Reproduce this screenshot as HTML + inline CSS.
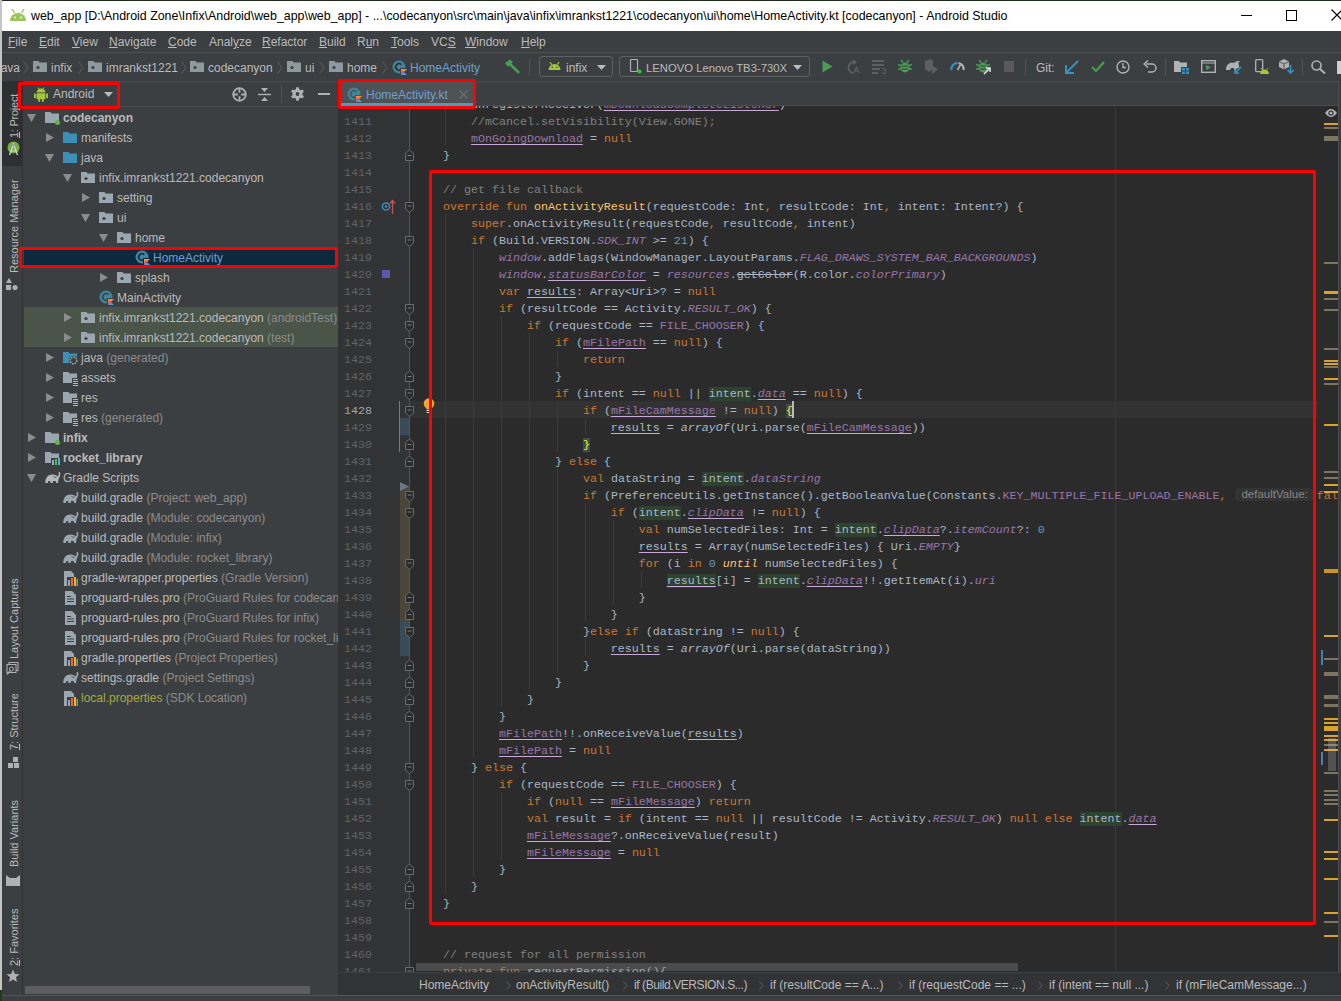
<!DOCTYPE html><html><head><meta charset="utf-8"><style>
*{margin:0;padding:0;box-sizing:border-box}
html,body{width:1341px;height:1001px;overflow:hidden;background:#3c3f41;font-family:"Liberation Sans",sans-serif;font-size:12px;color:#bbbbbb}
.a{position:absolute}
.ui{position:absolute;white-space:nowrap;font-family:"Liberation Sans",sans-serif;font-size:12px;line-height:14px;color:#bbbbbb}
.mono{font-family:"Liberation Mono",monospace}
.code{position:absolute;left:415px;white-space:pre;font-family:"Liberation Mono",monospace;font-size:11.667px;line-height:17px;height:17px;color:#a9b7c6}
.ln{position:absolute;left:338px;width:34px;text-align:right;white-space:pre;font-family:"Liberation Mono",monospace;font-size:11.667px;line-height:17px;color:#606366}
.k{color:#cc7832}.f{color:#ffc66d}.c{color:#808080}.p{color:#9876aa}.n{color:#6897bb}
.i{font-style:italic}.u{text-decoration:underline;text-decoration-color:#c8a9d8;text-underline-offset:2px}
.s{text-decoration:line-through}
.sc{background:#2e4230}
.red{position:absolute;border:3px solid #ff0000;border-radius:2px}
.tr{position:absolute;height:20px;white-space:nowrap;font-size:12px;line-height:20px;color:#bbbbbb}
.g{color:#8c8c8c}
.vt{position:absolute;white-space:nowrap;font-size:11px;line-height:14px;color:#bbbbbb;transform-origin:0 0;transform:rotate(-90deg)}
.mk{position:absolute;left:1324px;width:14px;height:2px}
.hint{display:inline-block;font-family:'Liberation Sans',sans-serif;font-style:normal;font-size:11.5px;line-height:13px;color:#878787;background:#333333;border-radius:4px;padding:0 5px 0 6px;margin-left:2px;margin-right:4px;vertical-align:1px}
.br{background:#3b514d;color:#ffef28}
.fold{position:absolute;left:403px;width:12px;height:12px}
</style></head><body><div class="a" style="left:0;top:0;width:1341px;height:1px;background:#1f2a1c"></div><div class="a" style="left:0;top:0;width:2px;height:1001px;background:#c4c4c4"></div><div class="a" style="left:0;top:990px;width:2px;height:11px;background:#1f3a1f"></div><div class="a" style="left:2px;top:1px;width:1339px;height:30px;background:#ffffff"></div><svg class="a" style="left:9px;top:8px" width="18" height="14" viewBox="0 0 18 14"><path d="M1 13 A8 8 0 0 1 17 13 Z" fill="#9bc45a"/><line x1="3" y1="1" x2="5.5" y2="5" stroke="#9bc45a" stroke-width="1.4"/><line x1="15" y1="1" x2="12.5" y2="5" stroke="#9bc45a" stroke-width="1.4"/><circle cx="6" cy="9.5" r="0.9" fill="#fff"/><circle cx="12" cy="9.5" r="0.9" fill="#fff"/></svg><div class="ui" style="left:31px;top:9px;font-size:12.4px;line-height:15px;color:#000">web_app [D:\Android Zone\Infix\Android\web_app\web_app] - ...\codecanyon\src\main\java\infix\imrankst1221\codecanyon\ui\home\HomeActivity.kt [codecanyon] - Android Studio</div><div class="a" style="left:1241px;top:15px;width:11px;height:1px;background:#000"></div><div class="a" style="left:1286px;top:10px;width:11px;height:11px;border:1px solid #000"></div><svg class="a" style="left:1331px;top:9px" width="12" height="12"><path d="M0.5 0.5 L11.5 11.5 M11.5 0.5 L0.5 11.5" stroke="#000" stroke-width="1.1"/></svg><div class="a" style="left:2px;top:31px;width:1339px;height:22px;background:#3c3f41;border-bottom:1px solid #515151"></div><div class="ui" style="left:8px;top:35px"><u>F</u>ile</div><div class="ui" style="left:39px;top:35px"><u>E</u>dit</div><div class="ui" style="left:72px;top:35px"><u>V</u>iew</div><div class="ui" style="left:109px;top:35px"><u>N</u>avigate</div><div class="ui" style="left:168px;top:35px"><u>C</u>ode</div><div class="ui" style="left:209px;top:35px">Anal<u>y</u>ze</div><div class="ui" style="left:262px;top:35px"><u>R</u>efactor</div><div class="ui" style="left:319px;top:35px"><u>B</u>uild</div><div class="ui" style="left:357px;top:35px">R<u>u</u>n</div><div class="ui" style="left:391px;top:35px"><u>T</u>ools</div><div class="ui" style="left:431px;top:35px">VC<u>S</u></div><div class="ui" style="left:465px;top:35px"><u>W</u>indow</div><div class="ui" style="left:521px;top:35px"><u>H</u>elp</div><div class="a" style="left:2px;top:53px;width:1339px;height:28px;background:#3c3f41"></div><div class="ui" style="left:2px;top:61px;width:18px;overflow:hidden;direction:rtl">java</div><svg class="a" style="left:23px;top:61px" width="6" height="13" viewBox="0 0 6 13"><path d="M0.5 0.5 L5 6.5 L0.5 12.5" fill="none" stroke="#5c5f61" stroke-width="1"/></svg><svg class="a" style="left:33px;top:61px" width="14" height="11" viewBox="0 0 14 11"><path d="M0 0 H5.5 L6.5 1.5 H14 V11 H0 Z" fill="#8e989f"/><circle cx="5" cy="6.5" r="1.6" fill="#3c3f41"/></svg><div class="ui" style="left:51px;top:61px">infix</div><svg class="a" style="left:78px;top:61px" width="6" height="13" viewBox="0 0 6 13"><path d="M0.5 0.5 L5 6.5 L0.5 12.5" fill="none" stroke="#5c5f61" stroke-width="1"/></svg><svg class="a" style="left:88px;top:61px" width="14" height="11" viewBox="0 0 14 11"><path d="M0 0 H5.5 L6.5 1.5 H14 V11 H0 Z" fill="#8e989f"/><circle cx="5" cy="6.5" r="1.6" fill="#3c3f41"/></svg><div class="ui" style="left:106px;top:61px">imrankst1221</div><svg class="a" style="left:181px;top:61px" width="6" height="13" viewBox="0 0 6 13"><path d="M0.5 0.5 L5 6.5 L0.5 12.5" fill="none" stroke="#5c5f61" stroke-width="1"/></svg><svg class="a" style="left:190px;top:61px" width="14" height="11" viewBox="0 0 14 11"><path d="M0 0 H5.5 L6.5 1.5 H14 V11 H0 Z" fill="#8e989f"/><circle cx="5" cy="6.5" r="1.6" fill="#3c3f41"/></svg><div class="ui" style="left:208px;top:61px">codecanyon</div><svg class="a" style="left:277px;top:61px" width="6" height="13" viewBox="0 0 6 13"><path d="M0.5 0.5 L5 6.5 L0.5 12.5" fill="none" stroke="#5c5f61" stroke-width="1"/></svg><svg class="a" style="left:287px;top:61px" width="14" height="11" viewBox="0 0 14 11"><path d="M0 0 H5.5 L6.5 1.5 H14 V11 H0 Z" fill="#8e989f"/><circle cx="5" cy="6.5" r="1.6" fill="#3c3f41"/></svg><div class="ui" style="left:305px;top:61px">ui</div><svg class="a" style="left:319px;top:61px" width="6" height="13" viewBox="0 0 6 13"><path d="M0.5 0.5 L5 6.5 L0.5 12.5" fill="none" stroke="#5c5f61" stroke-width="1"/></svg><svg class="a" style="left:329px;top:61px" width="14" height="11" viewBox="0 0 14 11"><path d="M0 0 H5.5 L6.5 1.5 H14 V11 H0 Z" fill="#8e989f"/><circle cx="5" cy="6.5" r="1.6" fill="#3c3f41"/></svg><div class="ui" style="left:347px;top:61px">home</div><svg class="a" style="left:382px;top:61px" width="6" height="13" viewBox="0 0 6 13"><path d="M0.5 0.5 L5 6.5 L0.5 12.5" fill="none" stroke="#5c5f61" stroke-width="1"/></svg><svg class="a" style="left:392px;top:60px" width="16" height="16" viewBox="0 0 16 16"><circle cx="7" cy="7" r="6.5" fill="#3e86a0"/><path d="M9.3 4.6 A3.3 3.3 0 1 0 9.3 9.4" fill="none" stroke="#2b2b2b" stroke-width="1.6"/><path d="M8 8 H16 L12 12 L16 16 H8 Z" fill="#3c3f41"/><path d="M9 9 H15 L9 15 Z" fill="#f88f2a"/><path d="M9 15 L12 12 L15 15 Z" fill="#3aa1e3"/><path d="M9 12 L11 10 L12 12 L9 15Z" fill="#e0508a"/></svg><div class="ui" style="left:410px;top:61px;color:#6e9fd0">HomeActivity</div><svg class="a" style="left:504px;top:59px" width="17" height="15" viewBox="0 0 17 15"><path d="M1 4 L6 0.5 L9 3 L7.5 4.5 L16 13 L14 14.8 L5.5 6.5 L4 8 Z" fill="#499c54"/></svg><div class="a" style="left:529px;top:58px;width:1px;height:18px;background:#515151"></div><div class="a" style="left:539px;top:56px;width:74px;height:21px;border:1px solid #5e6060;border-radius:3px"></div><svg class="a" style="left:548px;top:62px" width="13" height="8" viewBox="0 0 13 8"><path d="M0.5 8 A6 6 0 0 1 12.5 8 Z" fill="#a4c639"/><line x1="2" y1="0" x2="3.6" y2="2.6" stroke="#a4c639" stroke-width="1.2"/><line x1="11" y1="0" x2="9.4" y2="2.6" stroke="#a4c639" stroke-width="1.2"/><circle cx="4.2" cy="5.2" r="0.8" fill="#3c3f41"/><circle cx="8.8" cy="5.2" r="0.8" fill="#3c3f41"/></svg><div class="ui" style="left:566px;top:61px">infix</div><svg class="a" style="left:597px;top:65px" width="9" height="5" viewBox="0 0 9 5"><path d="M0 0 H9 L4.5 5 Z" fill="#bbbbbb"/></svg><div class="a" style="left:619px;top:56px;width:191px;height:21px;border:1px solid #5e6060;border-radius:3px"></div><svg class="a" style="left:629px;top:59px" width="13" height="15" viewBox="0 0 13 15"><rect x="1.5" y="0.5" width="7" height="12" rx="1" fill="none" stroke="#afb1b3" stroke-width="1.2"/><circle cx="10.5" cy="12.5" r="2" fill="#3fbf3f"/></svg><div class="ui" style="left:646px;top:61px;font-size:11.3px">LENOVO Lenovo TB3-730X</div><svg class="a" style="left:793px;top:65px" width="9" height="5" viewBox="0 0 9 5"><path d="M0 0 H9 L4.5 5 Z" fill="#bbbbbb"/></svg><svg class="a" style="left:822px;top:60px" width="11" height="13"><path d="M0.5 0.5 L10.5 6.5 L0.5 12.5 Z" fill="#499c54"/></svg><svg class="a" style="left:845px;top:59px" width="16" height="15" viewBox="0 0 16 15"><path d="M10 3 A5.5 5.5 0 1 0 8 14" fill="none" stroke="#5f5f5f" stroke-width="1.8"/><path d="M8 0 L12 3.5 L8 6Z" fill="#5f5f5f"/><path d="M9 14 L11.5 8 L14 14 M10 12 H13" stroke="#5f5f5f" stroke-width="1.2" fill="none"/></svg><svg class="a" style="left:872px;top:60px" width="15" height="14" viewBox="0 0 15 14"><rect x="0" y="0" width="12" height="2" fill="#5f5f5f"/><rect x="0" y="4" width="12" height="2" fill="#5f5f5f"/><rect x="0" y="8" width="8" height="2" fill="#5f5f5f"/><rect x="0" y="12" width="6" height="2" fill="#5f5f5f"/><path d="M10 9 A2.5 2.5 0 1 1 10 13.5" stroke="#5f5f5f" fill="none" stroke-width="1.2"/></svg><svg class="a" style="left:898px;top:59px" width="14" height="14" viewBox="0 0 14 14"><ellipse cx="7" cy="8.5" rx="4.5" ry="5" fill="#499c54"/><path d="M3 1 L5 3.5 M11 1 L9 3.5 M0 6 H3 M11 6 H14 M0 10 H3 M11 10 H14" stroke="#499c54" stroke-width="1.4"/><path d="M4 7 H10 M4 10 H10" stroke="#3c3f41" stroke-width="1"/></svg><svg class="a" style="left:924px;top:59px" width="15" height="15" viewBox="0 0 15 15"><path d="M1 2 L7 0 L9 2 V10 L5 13 L1 10 Z" fill="#5f5f5f"/><path d="M8 6 L14 10.5 L8 15 Z" fill="#5f5f5f"/></svg><svg class="a" style="left:950px;top:60px" width="15" height="12" viewBox="0 0 15 12"><path d="M1.5 10 A6 6 0 0 1 7.5 3" fill="none" stroke="#3592c4" stroke-width="2.2"/><path d="M8.5 3 A6 6 0 0 1 13.5 10" fill="none" stroke="#afb1b3" stroke-width="2.2"/><path d="M7.5 10 L10.5 4.5" stroke="#afb1b3" stroke-width="1.6"/></svg><svg class="a" style="left:976px;top:59px" width="14" height="14" viewBox="0 0 14 14"><ellipse cx="7" cy="8.5" rx="4.5" ry="5" fill="#499c54"/><path d="M3 1 L5 3.5 M11 1 L9 3.5 M0 6 H3 M11 6 H14 M0 10 H3 M11 10 H14" stroke="#499c54" stroke-width="1.4"/><path d="M4 7 H10 M4 10 H10" stroke="#3c3f41" stroke-width="1"/></svg><svg class="a" style="left:983px;top:66px" width="9" height="9"><path d="M1 8 L7 2 M3 2 H7 V6" stroke="#dddddd" stroke-width="1.6" fill="none"/></svg><div class="a" style="left:1004px;top:61px;width:10px;height:11px;background:#5a5a5a"></div><div class="a" style="left:1025px;top:58px;width:1px;height:18px;background:#515151"></div><div class="ui" style="left:1036px;top:61px">Git:</div><svg class="a" style="left:1065px;top:60px" width="14" height="14" viewBox="0 0 14 14"><path d="M13 1 L2 12" stroke="#3592c4" stroke-width="2"/><path d="M1 5 V13 H9" stroke="#3592c4" stroke-width="2" fill="none"/></svg><svg class="a" style="left:1091px;top:61px" width="14" height="12" viewBox="0 0 14 12"><path d="M1 6 L5 10 L13 1" stroke="#499c54" stroke-width="2.2" fill="none"/></svg><svg class="a" style="left:1116px;top:60px" width="14" height="14" viewBox="0 0 14 14"><circle cx="7" cy="7" r="6" fill="none" stroke="#afb1b3" stroke-width="1.4"/><path d="M7 3 V7.5 H10" stroke="#afb1b3" stroke-width="1.4" fill="none"/></svg><svg class="a" style="left:1143px;top:60px" width="14" height="14" viewBox="0 0 14 14"><path d="M3 4 H9 A4 4 0 0 1 9 12 H5" stroke="#afb1b3" stroke-width="1.5" fill="none"/><path d="M5 0.5 L1 4 L5 7.5" stroke="#afb1b3" stroke-width="1.5" fill="none"/></svg><div class="a" style="left:1165px;top:58px;width:1px;height:18px;background:#515151"></div><svg class="a" style="left:1174px;top:60px" width="16" height="14" viewBox="0 0 16 14"><path d="M0 1 H5 L6 2.5 H13 V7 H7 V12 H0Z" fill="#afb1b3"/><rect x="8" y="8" width="3" height="2.5" fill="#3592c4"/><rect x="12" y="8" width="3" height="2.5" fill="#3592c4"/><rect x="8" y="11.5" width="3" height="2.5" fill="#3592c4"/><rect x="12" y="11.5" width="3" height="2.5" fill="#3592c4"/></svg><svg class="a" style="left:1201px;top:60px" width="15" height="13" viewBox="0 0 15 13"><rect x="0.7" y="0.7" width="13.6" height="11.6" fill="none" stroke="#afb1b3" stroke-width="1.4"/><path d="M0.7 3 H14.3" stroke="#afb1b3"/><path d="M5 5 L10 7.5 L5 10Z" fill="#499c54"/></svg><svg class="a" style="left:1226px;top:59px" width="16" height="15" viewBox="0 0 16 15"><path d="M0 11 C0 5 4 3 8 4 C10 2 13 1 14 3 C12 3 12 5 13 6 V9 H11 L10 11 H8 V9 H5 L4 11 Z" fill="#afb1b3"/><path d="M15 8 L9 14 M9 10 V14 H13" stroke="#3592c4" stroke-width="1.6" fill="none"/></svg><svg class="a" style="left:1255px;top:59px" width="14" height="15" viewBox="0 0 14 15"><rect x="0.7" y="0.7" width="7" height="12" rx="1" fill="none" stroke="#afb1b3" stroke-width="1.3"/><path d="M5 15 A4.5 4.5 0 0 1 14 15Z" fill="#a4c639"/><path d="M6 9 L7 10.5 M13 9 L12 10.5" stroke="#a4c639"/></svg><svg class="a" style="left:1279px;top:59px" width="15" height="15" viewBox="0 0 15 15"><path d="M5 0 L10 2.5 V8 L5 10.5 L0 8 V2.5Z" fill="#afb1b3"/><path d="M0 2.5 L5 5 L10 2.5 M5 5 V10.5" stroke="#3c3f41" stroke-width="0.8" fill="none"/><path d="M11.5 6 V14 M8.5 11 L11.5 14 L14.5 11" stroke="#3592c4" stroke-width="1.6" fill="none"/></svg><div class="a" style="left:1302px;top:58px;width:1px;height:18px;background:#515151"></div><svg class="a" style="left:1311px;top:60px" width="15" height="14" viewBox="0 0 15 14"><circle cx="5.5" cy="5.5" r="4.5" fill="none" stroke="#afb1b3" stroke-width="1.6"/><path d="M8.8 8.8 L14 13.5" stroke="#afb1b3" stroke-width="2"/></svg><div class="a" style="left:1337px;top:61px;width:4px;height:13px;background:#d0d0d0"></div><div class="a" style="left:2px;top:81px;width:21px;height:914px;background:#3c3f41;border-right:1px solid #323232"></div><div class="a" style="left:2px;top:81px;width:21px;height:85px;background:#2d2f30"></div><div class="vt" style="left:7px;top:138px;color:#bbbbbb"><span style="letter-spacing:-0.25px"><u>1</u>: Project</span></div><svg class="a" style="left:7px;top:141px" width="14" height="15" viewBox="0 0 14 15"><circle cx="6.5" cy="6.5" r="6" fill="#78b040"/><path d="M2.5 14 L6.5 3 L10.5 14 M4 10 H9" stroke="#d8d8d8" stroke-width="1.2" fill="none"/><circle cx="6.5" cy="4" r="1.3" fill="#a0a0a0"/></svg><div class="vt" style="left:7px;top:273px;color:#bbbbbb">Resource Manager</div><svg class="a" style="left:6px;top:278px" width="12" height="12" viewBox="0 0 12 12"><path d="M3 0 L6 5 H0Z" fill="#afb1b3"/><rect x="0" y="7" width="5" height="5" fill="#afb1b3"/><circle cx="9" cy="9.5" r="2.6" fill="#afb1b3"/></svg><div class="vt" style="left:7px;top:659px;color:#bbbbbb">Layout Captures</div><svg class="a" style="left:6px;top:662px" width="13" height="13" viewBox="0 0 13 13"><rect x="3" y="0.5" width="9" height="8" fill="none" stroke="#afb1b3"/><rect x="1" y="2.5" width="9" height="8" fill="#3c3f41" stroke="#afb1b3"/><circle cx="5.5" cy="7" r="2" fill="none" stroke="#afb1b3"/><path d="M4 9 L1 12.5" stroke="#afb1b3" stroke-width="1.3"/></svg><div class="vt" style="left:7px;top:750px;color:#bbbbbb"><u>7</u>: Structure</div><svg class="a" style="left:8px;top:757px" width="11" height="11" viewBox="0 0 11 11"><rect x="5" y="0" width="5" height="5" fill="#afb1b3"/><rect x="0" y="6" width="5" height="5" fill="#afb1b3"/><rect x="6" y="6" width="5" height="5" fill="#afb1b3"/></svg><div class="vt" style="left:7px;top:867px;color:#bbbbbb">Build Variants</div><svg class="a" style="left:6px;top:875px" width="14" height="11" viewBox="0 0 14 11"><path d="M0 0 L4 3 H10 L14 0 V11 H0Z" fill="#afb1b3"/></svg><div class="vt" style="left:7px;top:966px;color:#bbbbbb"><u>2</u>: Favorites</div><svg class="a" style="left:6px;top:969px" width="14" height="14" viewBox="0 0 14 14"><path d="M7 0.5 L8.8 5 L13.5 5.3 L9.9 8.3 L11 13 L7 10.4 L3 13 L4.1 8.3 L0.5 5.3 L5.2 5Z" fill="#afb1b3"/></svg><div class="a" style="left:24px;top:81px;width:314px;height:914px;background:#3c3f41"></div><div class="a" style="left:24px;top:81px;width:314px;height:26px;border-top:1px solid #4b4b4b;border-bottom:1px solid #4b4b4b"></div><svg class="a" style="left:34px;top:87px" width="14" height="15" viewBox="0 0 14 15"><path d="M2.5 5.5 A4.5 4 0 0 1 11.5 5.5 Z" fill="#a4c639"/><line x1="4" y1="0.5" x2="5.2" y2="2.5" stroke="#a4c639"/><line x1="10" y1="0.5" x2="8.8" y2="2.5" stroke="#a4c639"/><rect x="2.5" y="6.3" width="9" height="6" rx="1" fill="#a4c639"/><rect x="0" y="6.3" width="1.8" height="5" rx="0.9" fill="#a4c639"/><rect x="12.2" y="6.3" width="1.8" height="5" rx="0.9" fill="#a4c639"/><rect x="4.3" y="11" width="1.8" height="4" rx="0.9" fill="#a4c639"/><rect x="7.9" y="11" width="1.8" height="4" rx="0.9" fill="#a4c639"/></svg><div class="ui" style="left:53px;top:87px">Android</div><svg class="a" style="left:104px;top:92px" width="9" height="5" viewBox="0 0 9 5"><path d="M0 0 H9 L4.5 5 Z" fill="#bbbbbb"/></svg><svg class="a" style="left:232px;top:87px" width="15" height="15" viewBox="0 0 15 15"><circle cx="7.5" cy="7.5" r="6.3" fill="none" stroke="#afb1b3" stroke-width="1.8"/><path d="M7.5 1.5 V5.8 M7.5 9.2 V13.5 M1.5 7.5 H5.8 M9.2 7.5 H13.5" stroke="#afb1b3" stroke-width="1.8"/></svg><svg class="a" style="left:258px;top:87px" width="13" height="15" viewBox="0 0 13 15"><path d="M0 7.5 H13" stroke="#afb1b3" stroke-width="1.4"/><path d="M3 1 H10 L6.5 5 Z M3 14 H10 L6.5 10 Z" fill="#afb1b3"/></svg><div class="a" style="left:281px;top:86px;width:1px;height:17px;background:#515151"></div><svg class="a" style="left:291px;top:87px" width="13" height="14" viewBox="0 0 13 14"><circle cx="6.5" cy="7" r="5" fill="#afb1b3"/><rect x="5" y="0.3" width="3" height="3" rx="0.8" fill="#afb1b3" transform="rotate(0 6.5 7)"/><rect x="5" y="0.3" width="3" height="3" rx="0.8" fill="#afb1b3" transform="rotate(60 6.5 7)"/><rect x="5" y="0.3" width="3" height="3" rx="0.8" fill="#afb1b3" transform="rotate(120 6.5 7)"/><rect x="5" y="0.3" width="3" height="3" rx="0.8" fill="#afb1b3" transform="rotate(180 6.5 7)"/><rect x="5" y="0.3" width="3" height="3" rx="0.8" fill="#afb1b3" transform="rotate(240 6.5 7)"/><rect x="5" y="0.3" width="3" height="3" rx="0.8" fill="#afb1b3" transform="rotate(300 6.5 7)"/><circle cx="6.5" cy="7" r="1.9" fill="#3c3f41"/></svg><div class="a" style="left:318px;top:93px;width:12px;height:2px;background:#afb1b3"></div><div class="a" style="left:24px;top:248px;width:314px;height:20px;background:#0d293e"></div><div class="a" style="left:24px;top:307px;width:314px;height:40px;background:#4a5449"></div><div class="a" style="left:24px;top:108px;width:314px;height:614px;overflow:hidden"><svg class="a" style="left:3px;top:6px" width="9" height="8" viewBox="0 0 9 8"><path d="M0 0 H9 L4.5 8Z" fill="#8c8c8c"/></svg><svg class="a" style="left:21px;top:4px" width="16" height="13" viewBox="0 0 16 13"><path d="M0 0 H5.5 L6.5 1.5 H14 V11 H0 Z" fill="#9aa7b0"/><circle cx="12.5" cy="10.5" r="2.5" fill="#62b543"/></svg><div class="tr" style="left:39px;top:0px;font-weight:bold">codecanyon</div><svg class="a" style="left:22px;top:25px" width="8" height="9" viewBox="0 0 8 9"><path d="M0 0 L8 4.5 L0 9Z" fill="#8c8c8c"/></svg><svg class="a" style="left:39px;top:24px" width="14" height="11" viewBox="0 0 14 11"><path d="M0 0 H5.5 L6.5 1.5 H14 V11 H0 Z" fill="#3d8fb5"/></svg><div class="tr" style="left:57px;top:20px">manifests</div><svg class="a" style="left:21px;top:46px" width="9" height="8" viewBox="0 0 9 8"><path d="M0 0 H9 L4.5 8Z" fill="#8c8c8c"/></svg><svg class="a" style="left:39px;top:44px" width="14" height="11" viewBox="0 0 14 11"><path d="M0 0 H5.5 L6.5 1.5 H14 V11 H0 Z" fill="#3d8fb5"/></svg><div class="tr" style="left:57px;top:40px">java</div><svg class="a" style="left:39px;top:66px" width="9" height="8" viewBox="0 0 9 8"><path d="M0 0 H9 L4.5 8Z" fill="#8c8c8c"/></svg><svg class="a" style="left:57px;top:64px" width="14" height="11" viewBox="0 0 14 11"><path d="M0 0 H5.5 L6.5 1.5 H14 V11 H0 Z" fill="#9aa7b0"/><circle cx="5" cy="6.5" r="1.6" fill="#3c3f41"/></svg><div class="tr" style="left:75px;top:60px">infix.imrankst1221.codecanyon</div><svg class="a" style="left:58px;top:85px" width="8" height="9" viewBox="0 0 8 9"><path d="M0 0 L8 4.5 L0 9Z" fill="#8c8c8c"/></svg><svg class="a" style="left:75px;top:84px" width="14" height="11" viewBox="0 0 14 11"><path d="M0 0 H5.5 L6.5 1.5 H14 V11 H0 Z" fill="#9aa7b0"/><circle cx="5" cy="6.5" r="1.6" fill="#3c3f41"/></svg><div class="tr" style="left:93px;top:80px">setting</div><svg class="a" style="left:57px;top:106px" width="9" height="8" viewBox="0 0 9 8"><path d="M0 0 H9 L4.5 8Z" fill="#8c8c8c"/></svg><svg class="a" style="left:75px;top:104px" width="14" height="11" viewBox="0 0 14 11"><path d="M0 0 H5.5 L6.5 1.5 H14 V11 H0 Z" fill="#9aa7b0"/><circle cx="5" cy="6.5" r="1.6" fill="#3c3f41"/></svg><div class="tr" style="left:93px;top:100px">ui</div><svg class="a" style="left:75px;top:126px" width="9" height="8" viewBox="0 0 9 8"><path d="M0 0 H9 L4.5 8Z" fill="#8c8c8c"/></svg><svg class="a" style="left:93px;top:124px" width="14" height="11" viewBox="0 0 14 11"><path d="M0 0 H5.5 L6.5 1.5 H14 V11 H0 Z" fill="#9aa7b0"/><circle cx="5" cy="6.5" r="1.6" fill="#3c3f41"/></svg><div class="tr" style="left:111px;top:120px">home</div><svg class="a" style="left:111px;top:142px" width="16" height="16" viewBox="0 0 16 16"><circle cx="7" cy="7" r="6.5" fill="#3e86a0"/><path d="M9.3 4.6 A3.3 3.3 0 1 0 9.3 9.4" fill="none" stroke="#0d293e" stroke-width="1.6"/><path d="M8 8 H16 V16 H8 Z" fill="#0d293e"/><path d="M9 9 H15 L9 15 Z" fill="#f88f2a"/><path d="M9 15 L12 12 L15 15 Z" fill="#3aa1e3"/><path d="M9 12.5 L11.2 10.3 L12 12 L9 15Z" fill="#e0508a"/></svg><div class="tr" style="left:129px;top:140px;color:#6e9fd0">HomeActivity</div><svg class="a" style="left:76px;top:165px" width="8" height="9" viewBox="0 0 8 9"><path d="M0 0 L8 4.5 L0 9Z" fill="#8c8c8c"/></svg><svg class="a" style="left:93px;top:164px" width="14" height="11" viewBox="0 0 14 11"><path d="M0 0 H5.5 L6.5 1.5 H14 V11 H0 Z" fill="#9aa7b0"/><circle cx="5" cy="6.5" r="1.6" fill="#3c3f41"/></svg><div class="tr" style="left:111px;top:160px">splash</div><svg class="a" style="left:75px;top:182px" width="16" height="16" viewBox="0 0 16 16"><circle cx="7" cy="7" r="6.5" fill="#3e86a0"/><path d="M9.3 4.6 A3.3 3.3 0 1 0 9.3 9.4" fill="none" stroke="#3c3f41" stroke-width="1.6"/><path d="M8 8 H16 V16 H8 Z" fill="#3c3f41"/><path d="M9 9 H15 L9 15 Z" fill="#f88f2a"/><path d="M9 15 L12 12 L15 15 Z" fill="#3aa1e3"/><path d="M9 12.5 L11.2 10.3 L12 12 L9 15Z" fill="#e0508a"/></svg><div class="tr" style="left:93px;top:180px">MainActivity</div><svg class="a" style="left:40px;top:205px" width="8" height="9" viewBox="0 0 8 9"><path d="M0 0 L8 4.5 L0 9Z" fill="#8c8c8c"/></svg><svg class="a" style="left:57px;top:204px" width="14" height="11" viewBox="0 0 14 11"><path d="M0 0 H5.5 L6.5 1.5 H14 V11 H0 Z" fill="#9aa7b0"/><circle cx="5" cy="6.5" r="1.6" fill="#3c3f41"/></svg><div class="tr" style="left:75px;top:200px">infix.imrankst1221.codecanyon <span class="g">(androidTest)</span></div><svg class="a" style="left:40px;top:225px" width="8" height="9" viewBox="0 0 8 9"><path d="M0 0 L8 4.5 L0 9Z" fill="#8c8c8c"/></svg><svg class="a" style="left:57px;top:224px" width="14" height="11" viewBox="0 0 14 11"><path d="M0 0 H5.5 L6.5 1.5 H14 V11 H0 Z" fill="#9aa7b0"/><circle cx="5" cy="6.5" r="1.6" fill="#3c3f41"/></svg><div class="tr" style="left:75px;top:220px">infix.imrankst1221.codecanyon <span class="g">(test)</span></div><svg class="a" style="left:22px;top:245px" width="8" height="9" viewBox="0 0 8 9"><path d="M0 0 L8 4.5 L0 9Z" fill="#8c8c8c"/></svg><svg class="a" style="left:39px;top:244px" width="16" height="14" viewBox="0 0 16 14"><path d="M0 0 H5.5 L6.5 1.5 H14 V11 H0 Z" fill="#3d8fb5"/><circle cx="10.5" cy="8.5" r="4.5" fill="#3c3f41"/><circle cx="10.5" cy="8.5" r="3.3" fill="none" stroke="#afb1b3" stroke-width="1.4" stroke-dasharray="1.5 1"/></svg><div class="tr" style="left:57px;top:240px">java <span class="g">(generated)</span></div><svg class="a" style="left:22px;top:265px" width="8" height="9" viewBox="0 0 8 9"><path d="M0 0 L8 4.5 L0 9Z" fill="#8c8c8c"/></svg><svg class="a" style="left:39px;top:264px" width="16" height="14" viewBox="0 0 16 14"><path d="M0 0 H5.5 L6.5 1.5 H14 V11 H0 Z" fill="#9aa7b0"/><rect x="9" y="6" width="7" height="8" fill="#3c3f41"/><path d="M10 7.5 H15 M10 9.5 H15 M10 11.5 H15 M10 13.5 H15" stroke="#f4af3d" stroke-width="1"/></svg><div class="tr" style="left:57px;top:260px">assets</div><svg class="a" style="left:22px;top:285px" width="8" height="9" viewBox="0 0 8 9"><path d="M0 0 L8 4.5 L0 9Z" fill="#8c8c8c"/></svg><svg class="a" style="left:39px;top:284px" width="16" height="14" viewBox="0 0 16 14"><path d="M0 0 H5.5 L6.5 1.5 H14 V11 H0 Z" fill="#9aa7b0"/><rect x="9" y="6" width="7" height="8" fill="#3c3f41"/><path d="M10 7.5 H15 M10 9.5 H15 M10 11.5 H15 M10 13.5 H15" stroke="#f4af3d" stroke-width="1"/></svg><div class="tr" style="left:57px;top:280px">res</div><svg class="a" style="left:22px;top:305px" width="8" height="9" viewBox="0 0 8 9"><path d="M0 0 L8 4.5 L0 9Z" fill="#8c8c8c"/></svg><svg class="a" style="left:39px;top:304px" width="16" height="14" viewBox="0 0 16 14"><path d="M0 0 H5.5 L6.5 1.5 H14 V11 H0 Z" fill="#9aa7b0"/><rect x="9" y="6" width="7" height="8" fill="#3c3f41"/><path d="M10 7.5 H15 M10 9.5 H15 M10 11.5 H15 M10 13.5 H15" stroke="#f4af3d" stroke-width="1"/></svg><div class="tr" style="left:57px;top:300px">res <span class="g">(generated)</span></div><svg class="a" style="left:4px;top:325px" width="8" height="9" viewBox="0 0 8 9"><path d="M0 0 L8 4.5 L0 9Z" fill="#8c8c8c"/></svg><svg class="a" style="left:21px;top:324px" width="16" height="13" viewBox="0 0 16 13"><path d="M0 0 H5.5 L6.5 1.5 H14 V11 H0 Z" fill="#9aa7b0"/><circle cx="12.5" cy="10.5" r="2.5" fill="#62b543"/></svg><div class="tr" style="left:39px;top:320px;font-weight:bold">infix</div><svg class="a" style="left:4px;top:345px" width="8" height="9" viewBox="0 0 8 9"><path d="M0 0 L8 4.5 L0 9Z" fill="#8c8c8c"/></svg><svg class="a" style="left:21px;top:344px" width="16" height="13" viewBox="0 0 16 13"><path d="M0 0 H5.5 L6.5 1.5 H14 V11 H0 Z" fill="#9aa7b0"/><rect x="6" y="6" width="10" height="7" fill="#3c3f41"/><rect x="7" y="8" width="2" height="5" fill="#9aa7b0"/><rect x="10" y="7" width="2" height="6" fill="#62b543"/><rect x="13" y="6" width="2" height="7" fill="#40b6e0"/></svg><div class="tr" style="left:39px;top:340px;font-weight:bold">rocket_library</div><svg class="a" style="left:3px;top:366px" width="9" height="8" viewBox="0 0 9 8"><path d="M0 0 H9 L4.5 8Z" fill="#8c8c8c"/></svg><svg class="a" style="left:21px;top:363px" width="16" height="13" viewBox="0 0 16 13"><path d="M0.3 12 C0.3 6.5 3 3.5 7.5 3.5 C10.5 3.5 12 4.5 12.8 5.5 C13.5 4.5 14 3.5 13.6 2 C13.4 1.3 14.6 0.6 15.1 1.5 C15.7 3 15.1 5.5 14.1 7 C13.6 8 13.1 9 13.1 12 H11.2 L10.6 10 H8.2 L7.6 12 H5.6 L5 10 H3.4 L2.8 12 Z" fill="#b4b6b8"/><path d="M8.5 5.5 Q10 7 11.5 6" stroke="#3c3f41" stroke-width="0.8" fill="none"/></svg><div class="tr" style="left:39px;top:360px">Gradle Scripts</div><svg class="a" style="left:39px;top:383px" width="16" height="13" viewBox="0 0 16 13"><path d="M0.3 12 C0.3 6.5 3 3.5 7.5 3.5 C10.5 3.5 12 4.5 12.8 5.5 C13.5 4.5 14 3.5 13.6 2 C13.4 1.3 14.6 0.6 15.1 1.5 C15.7 3 15.1 5.5 14.1 7 C13.6 8 13.1 9 13.1 12 H11.2 L10.6 10 H8.2 L7.6 12 H5.6 L5 10 H3.4 L2.8 12 Z" fill="#9aa7b0"/><path d="M8.5 5.5 Q10 7 11.5 6" stroke="#3c3f41" stroke-width="0.8" fill="none"/></svg><div class="tr" style="left:57px;top:380px">build.gradle <span class="g">(Project: web_app)</span></div><svg class="a" style="left:39px;top:403px" width="16" height="13" viewBox="0 0 16 13"><path d="M0.3 12 C0.3 6.5 3 3.5 7.5 3.5 C10.5 3.5 12 4.5 12.8 5.5 C13.5 4.5 14 3.5 13.6 2 C13.4 1.3 14.6 0.6 15.1 1.5 C15.7 3 15.1 5.5 14.1 7 C13.6 8 13.1 9 13.1 12 H11.2 L10.6 10 H8.2 L7.6 12 H5.6 L5 10 H3.4 L2.8 12 Z" fill="#9aa7b0"/><path d="M8.5 5.5 Q10 7 11.5 6" stroke="#3c3f41" stroke-width="0.8" fill="none"/></svg><div class="tr" style="left:57px;top:400px">build.gradle <span class="g">(Module: codecanyon)</span></div><svg class="a" style="left:39px;top:423px" width="16" height="13" viewBox="0 0 16 13"><path d="M0.3 12 C0.3 6.5 3 3.5 7.5 3.5 C10.5 3.5 12 4.5 12.8 5.5 C13.5 4.5 14 3.5 13.6 2 C13.4 1.3 14.6 0.6 15.1 1.5 C15.7 3 15.1 5.5 14.1 7 C13.6 8 13.1 9 13.1 12 H11.2 L10.6 10 H8.2 L7.6 12 H5.6 L5 10 H3.4 L2.8 12 Z" fill="#9aa7b0"/><path d="M8.5 5.5 Q10 7 11.5 6" stroke="#3c3f41" stroke-width="0.8" fill="none"/></svg><div class="tr" style="left:57px;top:420px">build.gradle <span class="g">(Module: infix)</span></div><svg class="a" style="left:39px;top:443px" width="16" height="13" viewBox="0 0 16 13"><path d="M0.3 12 C0.3 6.5 3 3.5 7.5 3.5 C10.5 3.5 12 4.5 12.8 5.5 C13.5 4.5 14 3.5 13.6 2 C13.4 1.3 14.6 0.6 15.1 1.5 C15.7 3 15.1 5.5 14.1 7 C13.6 8 13.1 9 13.1 12 H11.2 L10.6 10 H8.2 L7.6 12 H5.6 L5 10 H3.4 L2.8 12 Z" fill="#9aa7b0"/><path d="M8.5 5.5 Q10 7 11.5 6" stroke="#3c3f41" stroke-width="0.8" fill="none"/></svg><div class="tr" style="left:57px;top:440px">build.gradle <span class="g">(Module: rocket_library)</span></div><svg class="a" style="left:40px;top:463px" width="14" height="15" viewBox="0 0 14 15"><path d="M0 0 H7 L10 3 V15 H0Z" fill="#9aa7b0"/><rect x="3" y="6" width="11" height="9" fill="#3c3f41"/><rect x="4" y="9" width="2" height="6" fill="#9aa7b0"/><rect x="7" y="7" width="2" height="8" fill="#f26522"/><rect x="10" y="6" width="2" height="9" fill="#f4af3d"/><rect x="12.5" y="8" width="1.5" height="7" fill="#62b543"/></svg><div class="tr" style="left:57px;top:460px">gradle-wrapper.properties <span class="g">(Gradle Version)</span></div><svg class="a" style="left:41px;top:483px" width="11" height="14" viewBox="0 0 11 14"><path d="M0 0 H7 L11 4 V14 H0Z" fill="#9aa7b0"/><path d="M2 5.5 H6 M2 8 H9 M2 10.5 H9" stroke="#3c3f41" stroke-width="1"/></svg><div class="tr" style="left:57px;top:480px">proguard-rules.pro <span class="g">(ProGuard Rules for codecanyon)</span></div><svg class="a" style="left:41px;top:503px" width="11" height="14" viewBox="0 0 11 14"><path d="M0 0 H7 L11 4 V14 H0Z" fill="#9aa7b0"/><path d="M2 5.5 H6 M2 8 H9 M2 10.5 H9" stroke="#3c3f41" stroke-width="1"/></svg><div class="tr" style="left:57px;top:500px">proguard-rules.pro <span class="g">(ProGuard Rules for infix)</span></div><svg class="a" style="left:41px;top:523px" width="11" height="14" viewBox="0 0 11 14"><path d="M0 0 H7 L11 4 V14 H0Z" fill="#9aa7b0"/><path d="M2 5.5 H6 M2 8 H9 M2 10.5 H9" stroke="#3c3f41" stroke-width="1"/></svg><div class="tr" style="left:57px;top:520px">proguard-rules.pro <span class="g">(ProGuard Rules for rocket_library)</span></div><svg class="a" style="left:40px;top:543px" width="14" height="15" viewBox="0 0 14 15"><path d="M0 0 H7 L10 3 V15 H0Z" fill="#9aa7b0"/><rect x="3" y="6" width="11" height="9" fill="#3c3f41"/><rect x="4" y="9" width="2" height="6" fill="#9aa7b0"/><rect x="7" y="7" width="2" height="8" fill="#f26522"/><rect x="10" y="6" width="2" height="9" fill="#f4af3d"/><rect x="12.5" y="8" width="1.5" height="7" fill="#62b543"/></svg><div class="tr" style="left:57px;top:540px">gradle.properties <span class="g">(Project Properties)</span></div><svg class="a" style="left:39px;top:563px" width="16" height="13" viewBox="0 0 16 13"><path d="M0.3 12 C0.3 6.5 3 3.5 7.5 3.5 C10.5 3.5 12 4.5 12.8 5.5 C13.5 4.5 14 3.5 13.6 2 C13.4 1.3 14.6 0.6 15.1 1.5 C15.7 3 15.1 5.5 14.1 7 C13.6 8 13.1 9 13.1 12 H11.2 L10.6 10 H8.2 L7.6 12 H5.6 L5 10 H3.4 L2.8 12 Z" fill="#9aa7b0"/><path d="M8.5 5.5 Q10 7 11.5 6" stroke="#3c3f41" stroke-width="0.8" fill="none"/></svg><div class="tr" style="left:57px;top:560px">settings.gradle <span class="g">(Project Settings)</span></div><svg class="a" style="left:40px;top:583px" width="14" height="15" viewBox="0 0 14 15"><path d="M0 0 H7 L10 3 V15 H0Z" fill="#9aa7b0"/><rect x="3" y="6" width="11" height="9" fill="#3c3f41"/><rect x="4" y="9" width="2" height="6" fill="#9aa7b0"/><rect x="7" y="7" width="2" height="8" fill="#f26522"/><rect x="10" y="6" width="2" height="9" fill="#f4af3d"/><rect x="12.5" y="8" width="1.5" height="7" fill="#62b543"/></svg><div class="tr" style="left:57px;top:580px;color:#a8a83a">local.properties <span class="g">(SDK Location)</span></div></div><div class="a" style="left:25px;top:986px;width:285px;height:8px;background:#5b5d5f"></div><div class="a" style="left:338px;top:81px;width:1003px;height:25px;background:#3c3f41;border-top:1px solid #4b4b4b;border-bottom:1px solid #4b4b4b"></div><div class="a" style="left:341px;top:82px;width:132px;height:23px;background:#4e5254"></div><div class="a" style="left:341px;top:103px;width:132px;height:3px;background:#40a0c0"></div><svg class="a" style="left:347px;top:87px" width="16" height="16" viewBox="0 0 16 16"><circle cx="7" cy="7" r="6.5" fill="#3e86a0"/><path d="M9.3 4.6 A3.3 3.3 0 1 0 9.3 9.4" fill="none" stroke="#4e5254" stroke-width="1.6"/><path d="M8 8 H16 V16 H8 Z" fill="#4e5254"/><path d="M9 9 H15 L9 15 Z" fill="#f88f2a"/><path d="M9 15 L12 12 L15 15 Z" fill="#3aa1e3"/><path d="M9 12.5 L11.2 10.3 L12 12 L9 15Z" fill="#e0508a"/></svg><div class="ui" style="left:366px;top:88px;color:#6e9fd0">HomeActivity.kt</div><svg class="a" style="left:459px;top:90px" width="9" height="9"><path d="M0.5 0.5 L8.5 8.5 M8.5 0.5 L0.5 8.5" stroke="#6e6e6e" stroke-width="1.1"/></svg><div class="a" style="left:338px;top:106px;width:72px;height:866px;background:#313335"></div><div class="a" style="left:410px;top:106px;width:931px;height:866px;background:#2b2b2b"></div><div class="a" style="left:410px;top:401px;width:908px;height:17px;background:#323232"></div><div class="a" style="left:1115px;top:106px;width:1px;height:866px;background:#393939"></div><div class="a" style="left:338px;top:106px;width:1003px;height:866px;overflow:hidden"><div class="a" style="left:107px;top:-96px;width:1px;height:136px;background:#3b3b3b"></div><div class="a" style="left:107px;top:108px;width:1px;height:680px;background:#3b3b3b"></div><div class="a" style="left:135px;top:142px;width:1px;height:510px;background:#3b3b3b"></div><div class="a" style="left:135px;top:669px;width:1px;height:102px;background:#3b3b3b"></div><div class="a" style="left:163px;top:210px;width:1px;height:391px;background:#3b3b3b"></div><div class="a" style="left:191px;top:227px;width:1px;height:357px;background:#3b3b3b"></div><div class="a" style="left:219px;top:244px;width:1px;height:17px;background:#3b3b3b"></div><div class="a" style="left:219px;top:295px;width:1px;height:51px;background:#3b3b3b"></div><div class="a" style="left:247px;top:312px;width:1px;height:17px;background:#3b3b3b"></div><div class="a" style="left:219px;top:363px;width:1px;height:204px;background:#3b3b3b"></div><div class="a" style="left:247px;top:397px;width:1px;height:119px;background:#3b3b3b"></div><div class="a" style="left:275px;top:414px;width:1px;height:85px;background:#3b3b3b"></div><div class="a" style="left:303px;top:465px;width:1px;height:17px;background:#3b3b3b"></div><div class="a" style="left:247px;top:533px;width:1px;height:17px;background:#3b3b3b"></div><div class="a" style="left:163px;top:686px;width:1px;height:68px;background:#3b3b3b"></div><div class="code" style="left:77px;top:-9px">        unregisterReceiver(<span class="p u">mDownloadCompleteListener</span>)</div><div class="ln" style="left:0;top:8px">1411</div><div class="code" style="left:77px;top:8px">        <span class="c">//mCancel.setVisibility(View.GONE);</span></div><div class="ln" style="left:0;top:25px">1412</div><div class="code" style="left:77px;top:25px">        <span class="p u">mOnGoingDownload</span> = <span class="k">null</span></div><div class="ln" style="left:0;top:42px">1413</div><div class="code" style="left:77px;top:42px">    }</div><div class="ln" style="left:0;top:59px">1414</div><div class="code" style="left:77px;top:59px"></div><div class="ln" style="left:0;top:76px">1415</div><div class="code" style="left:77px;top:76px">    <span class="c">// get file callback</span></div><div class="ln" style="left:0;top:93px">1416</div><div class="code" style="left:77px;top:93px">    <span class="k">override fun </span><span class="f">onActivityResult</span>(requestCode: Int<span class="k">,</span> resultCode: Int<span class="k">,</span> intent: Intent?) {</div><div class="ln" style="left:0;top:110px">1417</div><div class="code" style="left:77px;top:110px">        <span class="k">super</span>.onActivityResult(requestCode<span class="k">,</span> resultCode<span class="k">,</span> intent)</div><div class="ln" style="left:0;top:127px">1418</div><div class="code" style="left:77px;top:127px">        <span class="k">if</span> (Build.VERSION.<span class="p i">SDK_INT</span> &gt;= <span class="n">21</span>) {</div><div class="ln" style="left:0;top:144px">1419</div><div class="code" style="left:77px;top:144px">            <span class="p i">window</span>.addFlags(WindowManager.LayoutParams.<span class="p i">FLAG_DRAWS_SYSTEM_BAR_BACKGROUNDS</span>)</div><div class="ln" style="left:0;top:161px">1420</div><div class="code" style="left:77px;top:161px">            <span class="p i">window</span>.<span class="p i u">statusBarColor</span> = <span class="p i">resources</span>.<span class="s">getColor</span>(R.color.<span class="p i">colorPrimary</span>)</div><div class="ln" style="left:0;top:178px">1421</div><div class="code" style="left:77px;top:178px">            <span class="k">var </span><span class="u">results</span>: Array&lt;Uri&gt;? = <span class="k">null</span></div><div class="ln" style="left:0;top:195px">1422</div><div class="code" style="left:77px;top:195px">            <span class="k">if</span> (resultCode == Activity.<span class="p i">RESULT_OK</span>) {</div><div class="ln" style="left:0;top:212px">1423</div><div class="code" style="left:77px;top:212px">                <span class="k">if</span> (requestCode == <span class="p">FILE_CHOOSER</span>) {</div><div class="ln" style="left:0;top:229px">1424</div><div class="code" style="left:77px;top:229px">                    <span class="k">if</span> (<span class="p u">mFilePath</span> == <span class="k">null</span>) {</div><div class="ln" style="left:0;top:246px">1425</div><div class="code" style="left:77px;top:246px">                        <span class="k">return</span></div><div class="ln" style="left:0;top:263px">1426</div><div class="code" style="left:77px;top:263px">                    }</div><div class="ln" style="left:0;top:280px">1427</div><div class="code" style="left:77px;top:280px">                    <span class="k">if</span> (intent == <span class="k">null</span> || <span class="sc">intent</span>.<span class="p i u">data</span> == <span class="k">null</span>) {</div><div class="ln" style="left:0;top:297px;color:#a4a3a3">1428</div><div class="code" style="left:77px;top:297px">                        <span class="k">if</span> (<span class="p u">mFileCamMessage</span> != <span class="k">null</span>) <span class="br">{</span></div><div class="ln" style="left:0;top:314px">1429</div><div class="code" style="left:77px;top:314px">                            <span class="u">results</span> = <span class="i">arrayOf</span>(Uri.parse(<span class="p u">mFileCamMessage</span>))</div><div class="ln" style="left:0;top:331px">1430</div><div class="code" style="left:77px;top:331px">                        <span class="br">}</span></div><div class="ln" style="left:0;top:348px">1431</div><div class="code" style="left:77px;top:348px">                    } <span class="k">else</span> {</div><div class="ln" style="left:0;top:365px">1432</div><div class="code" style="left:77px;top:365px">                        <span class="k">val</span> dataString = <span class="sc">intent</span>.<span class="p i">dataString</span></div><div class="ln" style="left:0;top:382px">1433</div><div class="code" style="left:77px;top:382px">                        <span class="k">if</span> (PreferenceUtils.getInstance().getBooleanValue(Constants.<span class="p">KEY_MULTIPLE_FILE_UPLOAD_ENABLE</span><span class="k">,</span> <span class="hint">defaultValue:</span><span class="k">false</span>))</div><div class="ln" style="left:0;top:399px">1434</div><div class="code" style="left:77px;top:399px">                            <span class="k">if</span> (<span class="sc">intent</span>.<span class="p i u">clipData</span> != <span class="k">null</span>) {</div><div class="ln" style="left:0;top:416px">1435</div><div class="code" style="left:77px;top:416px">                                <span class="k">val</span> numSelectedFiles: Int = <span class="sc">intent</span>.<span class="p i u">clipData</span>?.<span class="p i">itemCount</span>?: <span class="n">0</span></div><div class="ln" style="left:0;top:433px">1436</div><div class="code" style="left:77px;top:433px">                                <span class="u">results</span> = Array(numSelectedFiles) { Uri.<span class="p i">EMPTY</span>}</div><div class="ln" style="left:0;top:450px">1437</div><div class="code" style="left:77px;top:450px">                                <span class="k">for</span> (i <span class="k">in</span> <span class="n">0</span> <span class="f i">until</span> numSelectedFiles) {</div><div class="ln" style="left:0;top:467px">1438</div><div class="code" style="left:77px;top:467px">                                    <span class="u sc">results</span>[i] = <span class="sc">intent</span>.<span class="p i u">clipData</span>!!.getItemAt(i).<span class="p i">uri</span></div><div class="ln" style="left:0;top:484px">1439</div><div class="code" style="left:77px;top:484px">                                }</div><div class="ln" style="left:0;top:501px">1440</div><div class="code" style="left:77px;top:501px">                            }</div><div class="ln" style="left:0;top:518px">1441</div><div class="code" style="left:77px;top:518px">                        }<span class="k">else if</span> (dataString != <span class="k">null</span>) {</div><div class="ln" style="left:0;top:535px">1442</div><div class="code" style="left:77px;top:535px">                            <span class="u">results</span> = <span class="i">arrayOf</span>(Uri.parse(dataString))</div><div class="ln" style="left:0;top:552px">1443</div><div class="code" style="left:77px;top:552px">                        }</div><div class="ln" style="left:0;top:569px">1444</div><div class="code" style="left:77px;top:569px">                    }</div><div class="ln" style="left:0;top:586px">1445</div><div class="code" style="left:77px;top:586px">                }</div><div class="ln" style="left:0;top:603px">1446</div><div class="code" style="left:77px;top:603px">            }</div><div class="ln" style="left:0;top:620px">1447</div><div class="code" style="left:77px;top:620px">            <span class="p u">mFilePath</span>!!.onReceiveValue(<span class="u">results</span>)</div><div class="ln" style="left:0;top:637px">1448</div><div class="code" style="left:77px;top:637px">            <span class="p u">mFilePath</span> = <span class="k">null</span></div><div class="ln" style="left:0;top:654px">1449</div><div class="code" style="left:77px;top:654px">        } <span class="k">else</span> {</div><div class="ln" style="left:0;top:671px">1450</div><div class="code" style="left:77px;top:671px">            <span class="k">if</span> (requestCode == <span class="p">FILE_CHOOSER</span>) {</div><div class="ln" style="left:0;top:688px">1451</div><div class="code" style="left:77px;top:688px">                <span class="k">if</span> (<span class="k">null</span> == <span class="p u">mFileMessage</span>) <span class="k">return</span></div><div class="ln" style="left:0;top:705px">1452</div><div class="code" style="left:77px;top:705px">                <span class="k">val</span> result = <span class="k">if</span> (intent == <span class="k">null</span> || resultCode != Activity.<span class="p i">RESULT_OK</span>) <span class="k">null else </span><span class="sc">intent</span>.<span class="p i u">data</span></div><div class="ln" style="left:0;top:722px">1453</div><div class="code" style="left:77px;top:722px">                <span class="p u">mFileMessage</span>?.onReceiveValue(result)</div><div class="ln" style="left:0;top:739px">1454</div><div class="code" style="left:77px;top:739px">                <span class="p u">mFileMessage</span> = <span class="k">null</span></div><div class="ln" style="left:0;top:756px">1455</div><div class="code" style="left:77px;top:756px">            }</div><div class="ln" style="left:0;top:773px">1456</div><div class="code" style="left:77px;top:773px">        }</div><div class="ln" style="left:0;top:790px">1457</div><div class="code" style="left:77px;top:790px">    }</div><div class="ln" style="left:0;top:807px">1458</div><div class="code" style="left:77px;top:807px"></div><div class="ln" style="left:0;top:824px">1459</div><div class="code" style="left:77px;top:824px"></div><div class="ln" style="left:0;top:841px">1460</div><div class="code" style="left:77px;top:841px">    <span class="c">// request for all permission</span></div><div class="ln" style="left:0;top:858px">1461</div><div class="code" style="left:77px;top:858px">    <span class="k">private fun </span>requestPermission(){</div></div><div class="a" style="left:399px;top:401px;width:1px;height:51px;background:#4e8a86"></div><div class="a" style="left:400px;top:418px;width:9px;height:17px;background:#394b5a"></div><div class="a" style="left:400px;top:486px;width:9px;height:136px;background:#4b463a"></div><svg class="a" style="left:400px;top:482px" width="9" height="9"><path d="M0 0 L9 4.5 L0 9Z" fill="#6c7886"/></svg><div class="a" style="left:400px;top:622px;width:9px;height:34px;background:#394b5a"></div><div class="a" style="left:409px;top:106px;width:1px;height:866px;background:#555555"></div><svg class="a" style="left:405px;top:202px" width="9" height="11" viewBox="0 0 9 11"><path d="M0.5 0.5 H8.5 V7 L4.5 10.5 L0.5 7 Z" fill="#2b2b2b" stroke="#6b6b6b" stroke-width="1"/><path d="M2.5 4 H6.5" stroke="#7a7a7a" stroke-width="1"/></svg><svg class="a" style="left:405px;top:236px" width="9" height="11" viewBox="0 0 9 11"><path d="M0.5 0.5 H8.5 V7 L4.5 10.5 L0.5 7 Z" fill="#2b2b2b" stroke="#6b6b6b" stroke-width="1"/><path d="M2.5 4 H6.5" stroke="#7a7a7a" stroke-width="1"/></svg><svg class="a" style="left:405px;top:304px" width="9" height="11" viewBox="0 0 9 11"><path d="M0.5 0.5 H8.5 V7 L4.5 10.5 L0.5 7 Z" fill="#2b2b2b" stroke="#6b6b6b" stroke-width="1"/><path d="M2.5 4 H6.5" stroke="#7a7a7a" stroke-width="1"/></svg><svg class="a" style="left:405px;top:321px" width="9" height="11" viewBox="0 0 9 11"><path d="M0.5 0.5 H8.5 V7 L4.5 10.5 L0.5 7 Z" fill="#2b2b2b" stroke="#6b6b6b" stroke-width="1"/><path d="M2.5 4 H6.5" stroke="#7a7a7a" stroke-width="1"/></svg><svg class="a" style="left:405px;top:338px" width="9" height="11" viewBox="0 0 9 11"><path d="M0.5 0.5 H8.5 V7 L4.5 10.5 L0.5 7 Z" fill="#2b2b2b" stroke="#6b6b6b" stroke-width="1"/><path d="M2.5 4 H6.5" stroke="#7a7a7a" stroke-width="1"/></svg><svg class="a" style="left:405px;top:389px" width="9" height="11" viewBox="0 0 9 11"><path d="M0.5 0.5 H8.5 V7 L4.5 10.5 L0.5 7 Z" fill="#2b2b2b" stroke="#6b6b6b" stroke-width="1"/><path d="M2.5 4 H6.5" stroke="#7a7a7a" stroke-width="1"/></svg><svg class="a" style="left:405px;top:406px" width="9" height="11" viewBox="0 0 9 11"><path d="M0.5 0.5 H8.5 V7 L4.5 10.5 L0.5 7 Z" fill="#2b2b2b" stroke="#6b6b6b" stroke-width="1"/><path d="M2.5 4 H6.5" stroke="#7a7a7a" stroke-width="1"/></svg><svg class="a" style="left:405px;top:491px" width="9" height="11" viewBox="0 0 9 11"><path d="M0.5 0.5 H8.5 V7 L4.5 10.5 L0.5 7 Z" fill="#2b2b2b" stroke="#6b6b6b" stroke-width="1"/><path d="M2.5 4 H6.5" stroke="#7a7a7a" stroke-width="1"/></svg><svg class="a" style="left:405px;top:508px" width="9" height="11" viewBox="0 0 9 11"><path d="M0.5 0.5 H8.5 V7 L4.5 10.5 L0.5 7 Z" fill="#2b2b2b" stroke="#6b6b6b" stroke-width="1"/><path d="M2.5 4 H6.5" stroke="#7a7a7a" stroke-width="1"/></svg><svg class="a" style="left:405px;top:559px" width="9" height="11" viewBox="0 0 9 11"><path d="M0.5 0.5 H8.5 V7 L4.5 10.5 L0.5 7 Z" fill="#2b2b2b" stroke="#6b6b6b" stroke-width="1"/><path d="M2.5 4 H6.5" stroke="#7a7a7a" stroke-width="1"/></svg><svg class="a" style="left:405px;top:627px" width="9" height="11" viewBox="0 0 9 11"><path d="M0.5 0.5 H8.5 V7 L4.5 10.5 L0.5 7 Z" fill="#2b2b2b" stroke="#6b6b6b" stroke-width="1"/><path d="M2.5 4 H6.5" stroke="#7a7a7a" stroke-width="1"/></svg><svg class="a" style="left:405px;top:763px" width="9" height="11" viewBox="0 0 9 11"><path d="M0.5 0.5 H8.5 V7 L4.5 10.5 L0.5 7 Z" fill="#2b2b2b" stroke="#6b6b6b" stroke-width="1"/><path d="M2.5 4 H6.5" stroke="#7a7a7a" stroke-width="1"/></svg><svg class="a" style="left:405px;top:780px" width="9" height="11" viewBox="0 0 9 11"><path d="M0.5 0.5 H8.5 V7 L4.5 10.5 L0.5 7 Z" fill="#2b2b2b" stroke="#6b6b6b" stroke-width="1"/><path d="M2.5 4 H6.5" stroke="#7a7a7a" stroke-width="1"/></svg><svg class="a" style="left:405px;top:967px" width="9" height="11" viewBox="0 0 9 11"><path d="M0.5 0.5 H8.5 V7 L4.5 10.5 L0.5 7 Z" fill="#2b2b2b" stroke="#6b6b6b" stroke-width="1"/><path d="M2.5 4 H6.5" stroke="#7a7a7a" stroke-width="1"/></svg><svg class="a" style="left:405px;top:150px" width="9" height="11" viewBox="0 0 9 11"><path d="M0.5 3.5 L4.5 0 L8.5 3.5 V10.5 H0.5 Z" fill="#2b2b2b" stroke="#6b6b6b" stroke-width="1"/><path d="M2.5 5.5 H6.5" stroke="#7a7a7a" stroke-width="1"/></svg><svg class="a" style="left:405px;top:371px" width="9" height="11" viewBox="0 0 9 11"><path d="M0.5 3.5 L4.5 0 L8.5 3.5 V10.5 H0.5 Z" fill="#2b2b2b" stroke="#6b6b6b" stroke-width="1"/><path d="M2.5 5.5 H6.5" stroke="#7a7a7a" stroke-width="1"/></svg><svg class="a" style="left:405px;top:439px" width="9" height="11" viewBox="0 0 9 11"><path d="M0.5 3.5 L4.5 0 L8.5 3.5 V10.5 H0.5 Z" fill="#2b2b2b" stroke="#6b6b6b" stroke-width="1"/><path d="M2.5 5.5 H6.5" stroke="#7a7a7a" stroke-width="1"/></svg><svg class="a" style="left:405px;top:456px" width="9" height="11" viewBox="0 0 9 11"><path d="M0.5 3.5 L4.5 0 L8.5 3.5 V10.5 H0.5 Z" fill="#2b2b2b" stroke="#6b6b6b" stroke-width="1"/><path d="M2.5 5.5 H6.5" stroke="#7a7a7a" stroke-width="1"/></svg><svg class="a" style="left:405px;top:592px" width="9" height="11" viewBox="0 0 9 11"><path d="M0.5 3.5 L4.5 0 L8.5 3.5 V10.5 H0.5 Z" fill="#2b2b2b" stroke="#6b6b6b" stroke-width="1"/><path d="M2.5 5.5 H6.5" stroke="#7a7a7a" stroke-width="1"/></svg><svg class="a" style="left:405px;top:609px" width="9" height="11" viewBox="0 0 9 11"><path d="M0.5 3.5 L4.5 0 L8.5 3.5 V10.5 H0.5 Z" fill="#2b2b2b" stroke="#6b6b6b" stroke-width="1"/><path d="M2.5 5.5 H6.5" stroke="#7a7a7a" stroke-width="1"/></svg><svg class="a" style="left:405px;top:660px" width="9" height="11" viewBox="0 0 9 11"><path d="M0.5 3.5 L4.5 0 L8.5 3.5 V10.5 H0.5 Z" fill="#2b2b2b" stroke="#6b6b6b" stroke-width="1"/><path d="M2.5 5.5 H6.5" stroke="#7a7a7a" stroke-width="1"/></svg><svg class="a" style="left:405px;top:677px" width="9" height="11" viewBox="0 0 9 11"><path d="M0.5 3.5 L4.5 0 L8.5 3.5 V10.5 H0.5 Z" fill="#2b2b2b" stroke="#6b6b6b" stroke-width="1"/><path d="M2.5 5.5 H6.5" stroke="#7a7a7a" stroke-width="1"/></svg><svg class="a" style="left:405px;top:694px" width="9" height="11" viewBox="0 0 9 11"><path d="M0.5 3.5 L4.5 0 L8.5 3.5 V10.5 H0.5 Z" fill="#2b2b2b" stroke="#6b6b6b" stroke-width="1"/><path d="M2.5 5.5 H6.5" stroke="#7a7a7a" stroke-width="1"/></svg><svg class="a" style="left:405px;top:711px" width="9" height="11" viewBox="0 0 9 11"><path d="M0.5 3.5 L4.5 0 L8.5 3.5 V10.5 H0.5 Z" fill="#2b2b2b" stroke="#6b6b6b" stroke-width="1"/><path d="M2.5 5.5 H6.5" stroke="#7a7a7a" stroke-width="1"/></svg><svg class="a" style="left:405px;top:864px" width="9" height="11" viewBox="0 0 9 11"><path d="M0.5 3.5 L4.5 0 L8.5 3.5 V10.5 H0.5 Z" fill="#2b2b2b" stroke="#6b6b6b" stroke-width="1"/><path d="M2.5 5.5 H6.5" stroke="#7a7a7a" stroke-width="1"/></svg><svg class="a" style="left:405px;top:881px" width="9" height="11" viewBox="0 0 9 11"><path d="M0.5 3.5 L4.5 0 L8.5 3.5 V10.5 H0.5 Z" fill="#2b2b2b" stroke="#6b6b6b" stroke-width="1"/><path d="M2.5 5.5 H6.5" stroke="#7a7a7a" stroke-width="1"/></svg><svg class="a" style="left:405px;top:898px" width="9" height="11" viewBox="0 0 9 11"><path d="M0.5 3.5 L4.5 0 L8.5 3.5 V10.5 H0.5 Z" fill="#2b2b2b" stroke="#6b6b6b" stroke-width="1"/><path d="M2.5 5.5 H6.5" stroke="#7a7a7a" stroke-width="1"/></svg><svg class="a" style="left:381px;top:199px" width="15" height="15" viewBox="0 0 15 15"><circle cx="5" cy="7.5" r="3.6" fill="none" stroke="#3592c4" stroke-width="1.5"/><circle cx="5" cy="7.5" r="1.2" fill="#3592c4"/><path d="M11.5 15 V2 M9 4.5 L11.5 1.5 L14 4.5" stroke="#c75450" stroke-width="1.3" fill="none"/></svg><div class="a" style="left:382px;top:270px;width:8px;height:8px;background:#5b58b0"></div><svg class="a" style="left:423px;top:398px" width="12" height="16" viewBox="0 0 12 16"><circle cx="6" cy="5.5" r="5.3" fill="#f0a732"/><rect x="3.5" y="9" width="5" height="2.5" fill="#f0a732"/><path d="M3.5 12.5 H8.5 M3.5 14.5 H8.5" stroke="#dddddd" stroke-width="1"/></svg><div class="a" style="left:792px;top:401px;width:2px;height:17px;background:#bbbbbb"></div><div class="a" style="left:416px;top:963px;width:602px;height:8px;background:rgba(128,128,128,0.38)"></div><div class="mk" style="top:123px;height:2px;background:#d9a22a"></div><div class="mk" style="top:127px;height:2px;background:#7c7561"></div><div class="mk" style="top:136px;height:5px;background:#7c7561"></div><div class="mk" style="top:262px;height:2px;background:#7c7561"></div><div class="mk" style="top:291px;height:3px;background:#d9a22a"></div><div class="mk" style="top:298px;height:2px;background:#7c7561"></div><div class="mk" style="top:309px;height:2px;background:#7c7561"></div><div class="mk" style="top:348px;height:2px;background:#7c7561"></div><div class="mk" style="top:360px;height:2px;background:#d9a22a"></div><div class="mk" style="top:363px;height:2px;background:#d9a22a"></div><div class="mk" style="top:366px;height:2px;background:#7c7561"></div><div class="mk" style="top:378px;height:2px;background:#d9a22a"></div><div class="mk" style="top:383px;height:2px;background:#7c7561"></div><div class="mk" style="top:424px;height:2px;background:#d9a22a"></div><div class="mk" style="top:471px;height:2px;background:#7c7561"></div><div class="mk" style="top:477px;height:2px;background:#7c7561"></div><div class="mk" style="top:484px;height:2px;background:#d9a22a"></div><div class="mk" style="top:491px;height:2px;background:#d9a22a"></div><div class="mk" style="top:569px;height:4px;background:#c8961e"></div><div class="mk" style="top:635px;height:2px;background:#d9a22a"></div><div class="mk" style="top:658px;height:2px;background:#7c7561"></div><div class="mk" style="top:672px;height:4px;background:#7c7561"></div><div class="mk" style="top:695px;height:4px;background:#7c7561"></div><div class="mk" style="top:704px;height:3px;background:#7c7561"></div><div class="mk" style="top:718px;height:2px;background:#d9a22a"></div><div class="mk" style="top:722px;height:2px;background:#d9a22a"></div><div class="mk" style="top:726px;height:5px;background:#d9a22a"></div><div class="mk" style="top:735px;height:2px;background:#d9a22a"></div><div class="mk" style="top:739px;height:2px;background:#d9a22a"></div><div class="mk" style="top:744px;height:2px;background:#7c7561"></div><div class="mk" style="top:749px;height:2px;background:#d9a22a"></div><div class="mk" style="top:772px;height:2px;background:#7c7561"></div><div class="mk" style="top:790px;height:2px;background:#7c7561"></div><div class="mk" style="top:794px;height:2px;background:#7c7561"></div><div class="mk" style="top:799px;height:2px;background:#7c7561"></div><div class="mk" style="top:803px;height:2px;background:#7c7561"></div><div class="mk" style="top:819px;height:2px;background:#d9a22a"></div><div class="mk" style="top:851px;height:2px;background:#d9a22a"></div><div class="mk" style="top:858px;height:2px;background:#d9a22a"></div><div class="mk" style="top:878px;height:2px;background:#d9a22a"></div><div class="mk" style="top:912px;height:2px;background:#d9a22a"></div><div class="mk" style="top:921px;height:2px;background:#7c7561"></div><div class="mk" style="top:935px;height:2px;background:#d9a22a"></div><div class="a" style="left:1328px;top:738px;width:8px;height:33px;background:rgba(200,200,200,0.25)"></div><div class="a" style="left:1321px;top:752px;width:2px;height:13px;background:#4a7fb0"></div><div class="a" style="left:1321px;top:650px;width:2px;height:15px;background:#4a7fb0"></div><div class="a" style="left:1338px;top:81px;width:1px;height:891px;background:#4b4b4b"></div><div class="a" style="left:1339px;top:81px;width:2px;height:914px;background:#3c3f41"></div><svg class="a" style="left:1325px;top:108px" width="12" height="10" viewBox="0 0 12 10"><path d="M0 5 Q6 -3 12 5 Q6 13 0 5Z" fill="#afb1b3"/><circle cx="6" cy="5" r="2.6" fill="#2b2b2b"/><circle cx="6" cy="5" r="1.5" fill="#afb1b3"/></svg><div class="a" style="left:338px;top:972px;width:1003px;height:23px;background:#313335;border-top:1px solid #3c3f41"></div><div class="ui" style="left:419px;top:978px">HomeActivity</div><div class="ui" style="left:516px;top:978px">onActivityResult()</div><div class="ui" style="left:634px;top:978px;letter-spacing:-0.42px">if (Build.VERSION.S...)</div><div class="ui" style="left:770px;top:978px">if (resultCode == A...)</div><div class="ui" style="left:909px;top:978px">if (requestCode == ...)</div><div class="ui" style="left:1049px;top:978px">if (intent == null ...)</div><div class="ui" style="left:1176px;top:978px">if (mFileCamMessage...)</div><svg class="a" style="left:506px;top:981px" width="5" height="9"><path d="M0.5 0.5 L4 4.5 L0.5 8.5" fill="none" stroke="#5e5e5e"/></svg><svg class="a" style="left:623px;top:981px" width="5" height="9"><path d="M0.5 0.5 L4 4.5 L0.5 8.5" fill="none" stroke="#5e5e5e"/></svg><svg class="a" style="left:759px;top:981px" width="5" height="9"><path d="M0.5 0.5 L4 4.5 L0.5 8.5" fill="none" stroke="#5e5e5e"/></svg><svg class="a" style="left:898px;top:981px" width="5" height="9"><path d="M0.5 0.5 L4 4.5 L0.5 8.5" fill="none" stroke="#5e5e5e"/></svg><svg class="a" style="left:1038px;top:981px" width="5" height="9"><path d="M0.5 0.5 L4 4.5 L0.5 8.5" fill="none" stroke="#5e5e5e"/></svg><svg class="a" style="left:1165px;top:981px" width="5" height="9"><path d="M0.5 0.5 L4 4.5 L0.5 8.5" fill="none" stroke="#5e5e5e"/></svg><div class="a" style="left:2px;top:995px;width:1339px;height:6px;background:#3c3f41;border-top:1px solid #555555"></div><div class="red" style="left:18px;top:82px;width:102px;height:27px"></div><div class="red" style="left:19px;top:247px;width:319px;height:21px"></div><div class="red" style="left:338px;top:79px;width:138px;height:30px"></div><div class="red" style="left:429px;top:170px;width:887px;height:755px"></div></body></html>
